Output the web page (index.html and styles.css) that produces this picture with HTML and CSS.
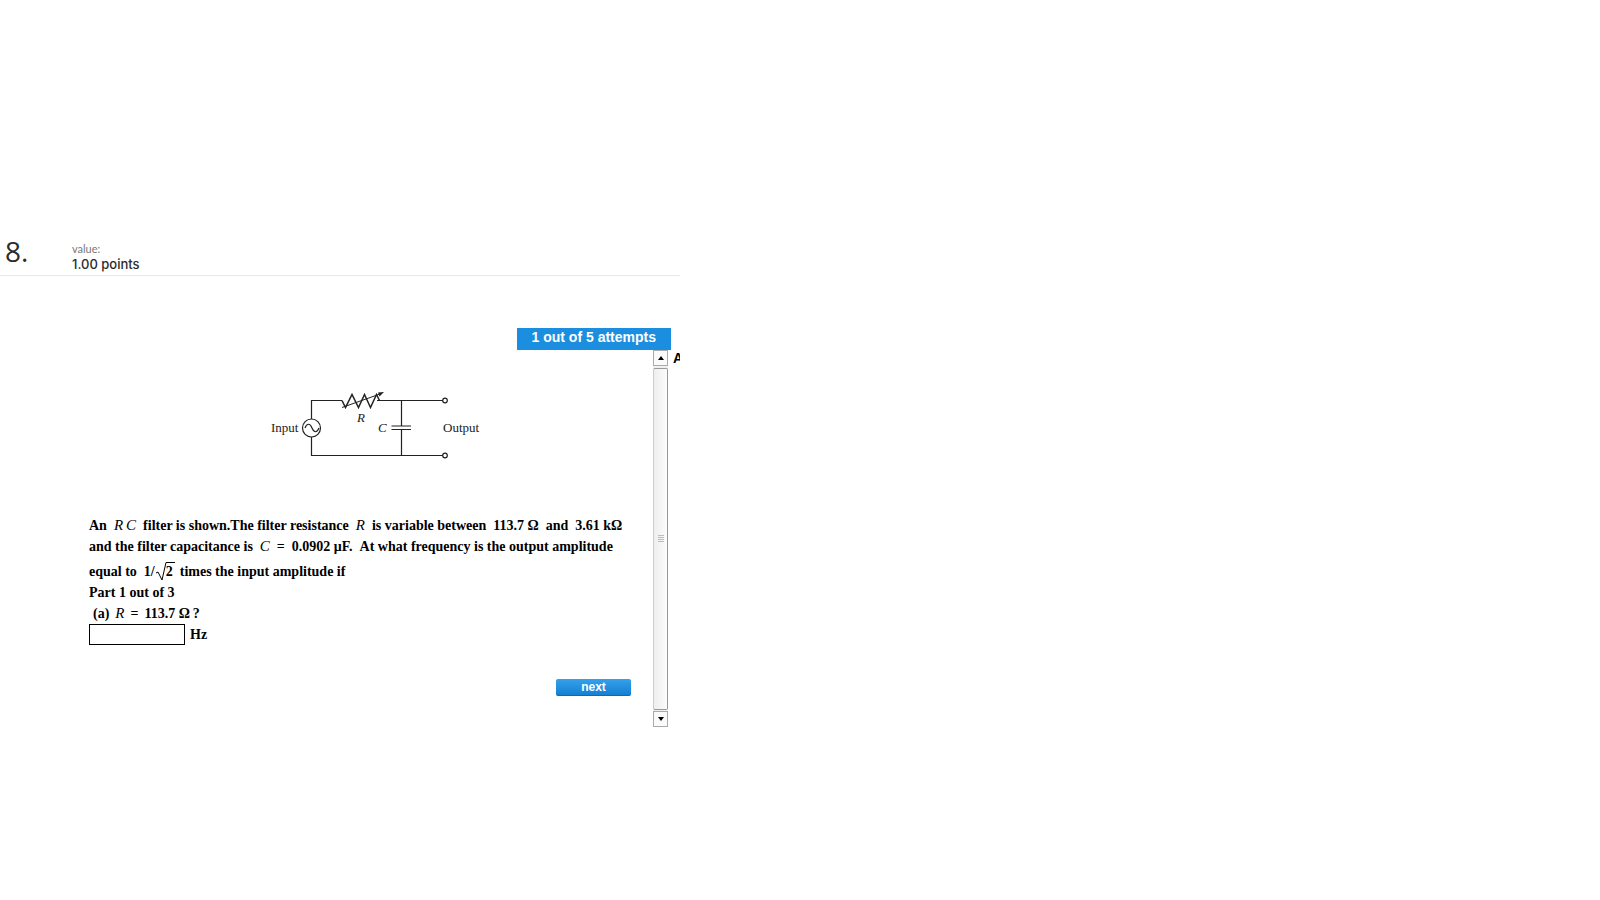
FILE: index.html
```html
<!DOCTYPE html>
<html lang="en">

<head>
	<meta charset="UTF-8">
	<meta name="viewport" content="width=device-width, initial-scale=1.0">
	<title>Question 8</title>
	<link rel="stylesheet" href="styles.css">
</head>

<body>
	<main class="question">
		<header class="header">
			<h1 class="number">8.</h1>
			<div class="value">
				<div class="valueLabel">value:</div>
				<div class="points">1.00 points</div>
			</div>
		</header>
		<div class="attempts">1 out of 5 attempts</div>
		<div class="frame">
			<div class="content">
				<svg class="circuit" width="230" height="90" viewBox="0 0 230 90" role="img" aria-label="RC filter circuit">
					<g fill="none" stroke="#222" stroke-width="1.2">
						<path d="M51.5 39V20.5H82M117 20.500H183" />
						<path d="M82 20.500l3.500 7L92 14.500l6.500 13 6-13 6 13 6-13 3 6" stroke-width="1.500" />
						<path d="M51.5 57V75.500H183M141.500 20.500V46M141.500 50V75.500" />
						<path d="M131.500 46H151M131.500 49.500H151" />
						<path d="M82 27.500L120 14" stroke-width="1" />
						<circle cx="51.500" cy="48" r="9" />
						<path d="M45 48c2-5 5-5 7 0s5 5 7 0" />
						<circle cx="185" cy="20.500" r="2.300" />
						<circle cx="185" cy="75.500" r="2.300" />
					</g>
					<path d="M124 12l-6 .5 1.500 4z" fill="#222" />
					<text x="11" y="52">Input</text>
					<text x="183" y="52">Output</text>
					<text x="97" y="42" class="symbol">R</text>
					<text x="118" y="52" class="symbol">C</text>
				</svg>
				<div class="text">
					<p class="line"><span>An</span> <i>R&thinsp;C</i> <span>filter is shown.The filter resistance</span> <i>R</i> <span>is variable between</span> <span>113.7 Ω</span> <span>and</span> <span>3.61 kΩ</span></p>
					<p class="line"><span>and the filter capacitance is</span> <i>C</i> <span>=</span> <span>0.0902 μF.</span> <span>At what frequency is the output amplitude</span></p>
					<p class="line rootLine"><span>equal to</span> <span class="fraction">1/<svg class="root" width="20" height="20" viewBox="0 0 20 20" aria-hidden="true"><path d="M1 12l2-1 4 8L11 1.500h9" fill="none" stroke="#000" /></svg><span>2</span></span> <span>times the input amplitude if</span></p>
					<p class="line">Part 1 out of 3</p>
					<p class="line part"><label for="answer">(a)</label> <i>R</i> <span>=</span> <span>113.7 Ω&thinsp;?</span></p>
					<div class="answerRow">
						<input type="text" id="answer" class="answer" autocomplete="off">
						<label for="answer">Hz</label>
					</div>
				</div>
				<button type="button" class="next">next</button>
			</div>
			<div class="scrollbar">
				<button type="button" class="arrow" aria-label="Scroll up"><svg width="6" height="4" viewBox="0 0 6 4"><path d="M0 4l3-4 3 4z" /></svg></button>
				<div class="thumb">
					<svg width="6" height="8" viewBox="0 0 6 8"><path d="M0 .5h6M0 2.500h6M0 4.500h6M0 6.500h6" stroke="#bbb" /></svg>
				</div>
				<button type="button" class="arrow" aria-label="Scroll down"><svg width="6" height="4" viewBox="0 0 6 4"><path d="M0 0h6l-3 4z" /></svg></button>
			</div>
			<div class="side">A</div>
		</div>
	</main>
</body>

</html>
```
FILE: styles.css
```css
body {
	margin: 0;
	background-color: #fff;
	color: #000;
}

.question {
	max-width: 680px;
	padding-top: 232px;
}

.header {
	display: flex;
	height: 43px;
	border-bottom: 1px solid #e8e8e8;
	font-family: "Open Sans", sans-serif;
	color: #2b2b2b;
}

.number {
	flex: 0 0 67px;
	margin: 0;
	padding-left: 5px;
	font-size: 28px;
	font-weight: 400;
	line-height: 39px;
}

.value {
	padding-top: 10px;
}

.valueLabel {
	font-family: Lato, sans-serif;
	font-size: 11px;
	line-height: 14px;
	color: #777;
}

.points {
	font-family: Inter, sans-serif;
	font-size: 13px;
	font-weight: 500;
	line-height: 16px;
}

.attempts {
	width: fit-content;
	height: 22px;
	box-sizing: border-box;
	margin: 52px 9px 0 auto;
	padding: 0 15px;
	background-color: #1b8ee0;
	color: #fff;
	font: bold 14px/19px "Liberation Sans", sans-serif;
}

.frame {
	display: flex;
}

.content {
	flex: 1;
	display: flex;
	flex-direction: column;
	padding: 30px 22px 31px 89px;
}

.circuit {
	align-self: center;
	margin-left: 30px;
	font-family: "Liberation Serif", serif;
	font-size: 13px;
	fill: #222;
}

.symbol {
	font-style: italic;
}

.text {
	margin-top: 45px;
	font: bold 14px/21px "Liberation Serif", serif;
}

.line {
	display: flex;
	align-items: baseline;
	gap: 7px;
	height: 21px;
	margin: 0;
	white-space: nowrap;
}

.line i {
	font-size: 15px;
	font-weight: 400;
}

.rootLine {
	padding-top: 4px;
}

.fraction {
	display: flex;
}

.root {
	margin-right: -9px;
}

.part {
	gap: 6px;
	padding-left: 4px;
}

.answerRow {
	display: flex;
	align-items: center;
	gap: 5px;
}

.answer {
	width: 96px;
	height: 21px;
	box-sizing: border-box;
	border: 1px solid #000;
}

.next {
	align-self: flex-end;
	width: 75px;
	height: 17px;
	margin-top: 34px;
	padding: 0;
	border: 0;
	border-bottom: 1px solid #1268ac;
	border-radius: 2px;
	background-image: linear-gradient(#36a0ec, #1580d2);
	color: #fff;
	font: bold 12px/16px "Liberation Sans", sans-serif;
}

.scrollbar {
	display: flex;
	flex-direction: column;
	width: 15px;
	background-color: #f0f0f0;
}

.arrow {
	display: flex;
	align-items: center;
	justify-content: center;
	height: 16px;
	padding: 0;
	border: 1px solid #aaa;
	background-color: #fafafa;
}

.thumb {
	flex: 1;
	display: flex;
	align-items: center;
	justify-content: center;
	margin: 2px 0 1px;
	border: 1px solid #999;
	border-left-color: #ccc;
	border-radius: 2px;
	background-image: linear-gradient(to right, #eee, #fcfcfc);
}

.side {
	width: 7px;
	margin-left: 5px;
	overflow: hidden;
	font: bold 14px/16px "Liberation Sans", sans-serif;
}
```
